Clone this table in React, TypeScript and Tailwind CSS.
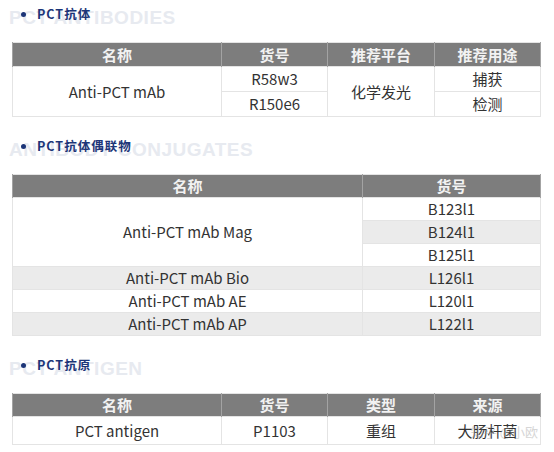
const font = { fontFamily: '"Noto Sans CJK SC", "Noto Sans", sans-serif' };

function Heading({ title, ghost }: { title: string; ghost: string }) {
  return (
    <div className="relative h-[20px]">
      <span
        className="absolute left-[-3px] top-[4px] whitespace-nowrap text-[19px] font-bold leading-[20px] text-[#e7eaf0] tracking-[0.5px]"
        style={{ fontFamily: '"Liberation Sans", Arial, sans-serif' }}
      >
        {ghost}
      </span>
      <div className="relative flex h-[20px] items-center">
        <span className="ml-[9px] h-[5px] w-[5px] rounded-full bg-[#1c3578]" />
        <span className="ml-[11px] text-[12.5px] font-bold tracking-[1px] text-[#1c3578]">{title}</span>
      </div>
    </div>
  );
}

const th = "border-x border-[#a3a3a3] bg-[#7d7d7d] p-0 text-center text-[15px] font-bold leading-[20px] text-[#f2f2f2]";
const td = "border border-[#e4e4e4] p-0 text-center text-[15px] leading-[20px] text-[#333333]";

export default function App() {
  return (
    <div className="w-[554px] bg-white px-3 pt-[4px]" style={font}>
      {/* PCT抗体 */}
      <Heading title="PCT抗体" ghost="PCT ANTIBODIES" />
      <table className="mt-[18px] w-[528px] table-fixed border-collapse border border-[#e4e4e4]">
        <colgroup>
          <col className="w-[209px]" />
          <col className="w-[106px]" />
          <col className="w-[107px]" />
          <col className="w-[106px]" />
        </colgroup>
        <thead>
          <tr className="h-[24px]">
            <th className={th}>名称</th>
            <th className={th}>货号</th>
            <th className={th}>推荐平台</th>
            <th className={th}>推荐用途</th>
          </tr>
        </thead>
        <tbody>
          <tr className="h-[25px]">
            <td className={td} rowSpan={2}>Anti-PCT mAb</td>
            <td className={td}>R58w3</td>
            <td className={td} rowSpan={2}>化学发光</td>
            <td className={td}>捕获</td>
          </tr>
          <tr className="h-[25px]">
            <td className={td}>R150e6</td>
            <td className={td}>检测</td>
          </tr>
        </tbody>
      </table>

      {/* PCT抗体偶联物 */}
      <div className="mt-[19px]">
        <Heading title="PCT抗体偶联物" ghost="ANTIBODY CONJUGATES" />
      </div>
      <table className="mt-[18px] w-[528px] table-fixed border-collapse border border-[#e4e4e4]">
        <colgroup>
          <col className="w-[350px]" />
          <col className="w-[178px]" />
        </colgroup>
        <thead>
          <tr className="h-[23px]">
            <th className={th}>名称</th>
            <th className={th}>货号</th>
          </tr>
        </thead>
        <tbody>
          <tr className="h-[23px]">
            <td className={td} rowSpan={3}>Anti-PCT mAb Mag</td>
            <td className={td}>B123l1</td>
          </tr>
          <tr className="h-[23px] bg-[#ebebeb]">
            <td className={td}>B124l1</td>
          </tr>
          <tr className="h-[23px]">
            <td className={td}>B125l1</td>
          </tr>
          <tr className="h-[23px] bg-[#ebebeb]">
            <td className={td}>Anti-PCT mAb Bio</td>
            <td className={td}>L126l1</td>
          </tr>
          <tr className="h-[23px]">
            <td className={td}>Anti-PCT mAb AE</td>
            <td className={td}>L120l1</td>
          </tr>
          <tr className="h-[23px] bg-[#ebebeb]">
            <td className={td}>Anti-PCT mAb AP</td>
            <td className={td}>L122l1</td>
          </tr>
        </tbody>
      </table>

      {/* PCT抗原 */}
      <div className="mt-[19px]">
        <Heading title="PCT抗原" ghost="PCT ANTIGEN" />
      </div>
      <table className="mt-[18px] w-[528px] table-fixed border-collapse border border-[#e4e4e4]">
        <colgroup>
          <col className="w-[209px]" />
          <col className="w-[106px]" />
          <col className="w-[107px]" />
          <col className="w-[106px]" />
        </colgroup>
        <thead>
          <tr className="h-[23px]">
            <th className={th}>名称</th>
            <th className={th}>货号</th>
            <th className={th}>类型</th>
            <th className={th}>来源</th>
          </tr>
        </thead>
        <tbody>
          <tr className="h-[28px]">
            <td className={td}>PCT antigen</td>
            <td className={td}>P1103</td>
            <td className={td}>重组</td>
            <td className={`${td} relative`}>
              大肠杆菌
              <span className="pointer-events-none absolute right-[2px] top-[5px] text-[13px] text-[#9a9a9a] opacity-40">
                知乎 @小欧
              </span>
            </td>
          </tr>
        </tbody>
      </table>
      <div className="h-[9px]" />
    </div>
  );
}
